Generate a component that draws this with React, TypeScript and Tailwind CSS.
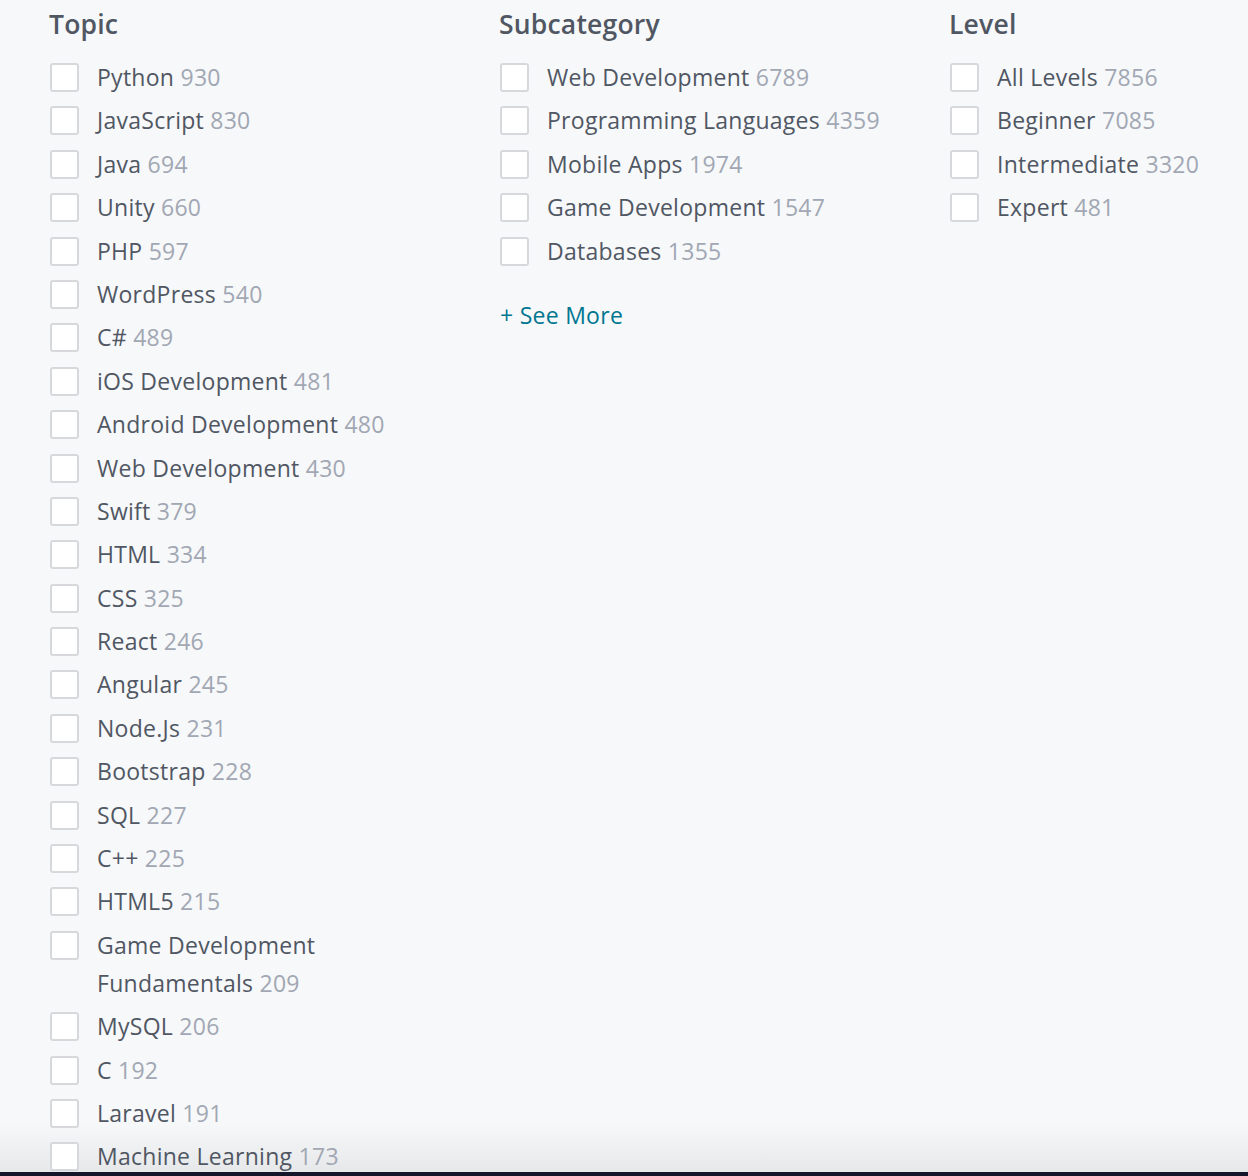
const topics: [string, number][] = [
  ["Python", 930],
  ["JavaScript", 830],
  ["Java", 694],
  ["Unity", 660],
  ["PHP", 597],
  ["WordPress", 540],
  ["C#", 489],
  ["iOS Development", 481],
  ["Android Development", 480],
  ["Web Development", 430],
  ["Swift", 379],
  ["HTML", 334],
  ["CSS", 325],
  ["React", 246],
  ["Angular", 245],
  ["Node.Js", 231],
  ["Bootstrap", 228],
  ["SQL", 227],
  ["C++", 225],
  ["HTML5", 215],
  ["Game Development Fundamentals", 209],
  ["MySQL", 206],
  ["C", 192],
  ["Laravel", 191],
  ["Machine Learning", 173],
];

const subcategories: [string, number][] = [
  ["Web Development", 6789],
  ["Programming Languages", 4359],
  ["Mobile Apps", 1974],
  ["Game Development", 1547],
  ["Databases", 1355],
];

const levels: [string, number][] = [
  ["All Levels", 7856],
  ["Beginner", 7085],
  ["Intermediate", 3320],
  ["Expert", 481],
];

function FilterRow({ label, count, narrow }: { label: string; count: number; narrow?: boolean }) {
  return (
    <label className="flex items-start cursor-pointer">
      <span className="mt-[5px] w-[29px] h-[29px] shrink-0 rounded-[3px] border-2 border-[#d6d8dc] bg-white" />
      <span
        className={
          (narrow ? "max-w-[330px] " : "max-w-[390px] ") +
          "ml-[18px] text-[23px] leading-[38px] tracking-[0.27px] text-[#505763]"
        }
      >
        {label} <span className="text-[#a1a7b3]">{count}</span>
      </span>
    </label>
  );
}

function FilterColumn({
  title,
  items,
  seeMore,
  narrow,
}: {
  title: string;
  items: [string, number][];
  seeMore?: boolean;
  narrow?: boolean;
}) {
  return (
    <div className="w-[450px] shrink-0">
      <h3 className="text-[26.5px] leading-[32px] tracking-[0.2px] font-semibold text-[#505763] -ml-[1px]">{title}</h3>
      <div className="mt-[18px] flex flex-col gap-[5.4px]">
        {items.map(([label, count]) => (
          <FilterRow key={label} label={label} count={count} narrow={narrow} />
        ))}
      </div>
      {seeMore && (
        <button className="mt-[26px] text-[23px] leading-[38px] tracking-[0.27px] text-[#007791]">+ See More</button>
      )}
    </div>
  );
}

export default function App() {
  return (
    <div
      className="relative h-[1176px] w-full overflow-hidden bg-[#f7f8fa]"
      style={{ fontFamily: '"Open Sans", "Noto Sans", sans-serif' }}
    >
      {/* soft shade behind the list near the bottom edge */}
      <div className="absolute inset-x-0 bottom-[4px] h-[50px] bg-gradient-to-b from-[#f7f8fa] to-[#e7e8ea]" />

      <div className="relative flex pl-[50px] pt-[8px]">
        <FilterColumn title="Topic" items={topics} narrow />
        <FilterColumn title="Subcategory" items={subcategories} seeMore />
        <FilterColumn title="Level" items={levels} />
      </div>

      <div className="absolute inset-x-0 bottom-0 h-[4px] bg-[#14172a]" />
    </div>
  );
}
